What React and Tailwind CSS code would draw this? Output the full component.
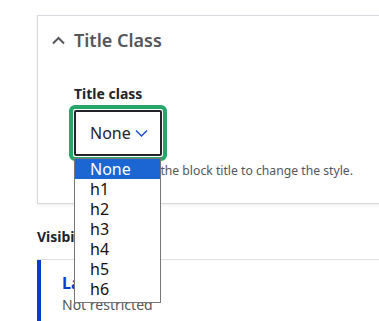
export default function App() {
  const options = ['None', 'h1', 'h2', 'h3', 'h4', 'h5', 'h6']

  return (
    <div className="w-[379px] h-[321px] overflow-hidden bg-white pt-[15px] pl-[37px] font-['Noto_Sans',sans-serif] text-[#232429]">
      <div className="mr-[-20px] border border-[#d8d9de] bg-white shadow-[0_1px_3px_rgba(0,0,0,0.08)]">
        <div className="flex items-center gap-[9px] pt-[12px] pl-[14px] h-[36px]">
          <svg width="13" height="9" viewBox="0 0 13 9" fill="none">
            <path d="M1 7.5 L6.5 2 L12 7.5" stroke="#55565b" strokeWidth="2" />
          </svg>
          <span className="text-[18px] leading-[24px] font-semibold text-[#55565b]">Title Class</span>
        </div>
        <div className="pl-[36px] pt-[32px] pb-[23px]">
          <div className="text-[14px] leading-[20px] font-bold">Title class</div>
          <div className="relative mt-[1px] ml-[-5px] w-fit">
            <div className="border-[4px] border-[#26a769] rounded-[6px] p-[1px]">
              <div className="flex items-center gap-[4px] w-[88px] h-[46px] border-2 border-[#232429] rounded-[2px] pl-[14px] bg-white">
                <span className="text-[16px] leading-[20px] text-[#232429]">None</span>
                <svg width="13" height="9" viewBox="0 0 13 9" fill="none">
                  <path d="M1 1.5 L6.5 7 L12 1.5" stroke="#1c4fd1" strokeWidth="1.5" />
                </svg>
              </div>
            </div>
            <div className="absolute left-[5px] top-[53px] z-10 w-[87px] border border-[#767676] bg-white pb-[3px]">
              {options.map((o, i) => (
                <div
                  key={o}
                  className={
                    i === 0
                      ? 'h-[20px] pl-[15px] text-[16px] leading-[20px] bg-[#1c66d4] text-white'
                      : 'h-[20px] pl-[15px] text-[16px] leading-[20px] text-[#111]'
                  }
                >
                  {o}
                </div>
              ))}
            </div>
          </div>
          <div className="mt-[1px] text-[12.2px] leading-[18px] text-[#545560]">
            Add a class for the block title to change the style.
          </div>
        </div>
      </div>

      <div className="mt-[23px] text-[14px] leading-[20px] font-bold">Visibility</div>
      <div className="mt-[12px] border-t border-[#dedfe4]">
        <div className="border-l-4 border-[#003ecc] pl-[21px] pt-[11px] h-[80px]">
          <div className="text-[16px] leading-[24px] font-bold text-[#003ecc]">Language</div>
          <div className="text-[14px] leading-[20px] text-[#55565b]">Not restricted</div>
        </div>
      </div>
    </div>
  )
}
